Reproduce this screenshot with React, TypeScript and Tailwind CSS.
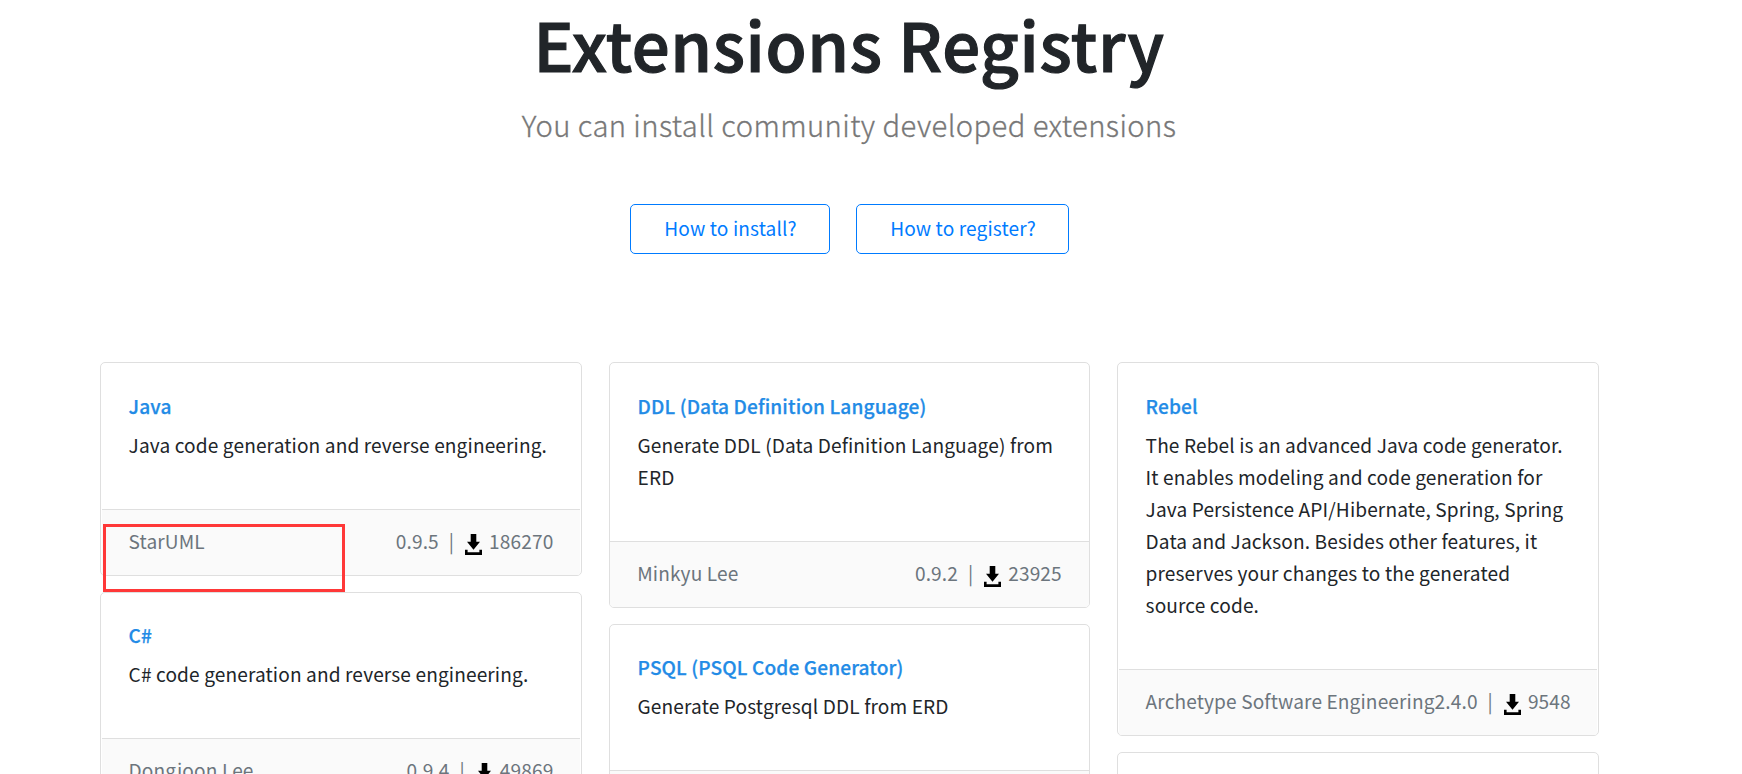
import React from 'react';

type Extension = {
  name: string;
  text: string;
  author: string;
  version: string;
  downloads: string;
};

const columns: Extension[][] = [
  [
    { name: 'Java', text: 'Java code generation and reverse engineering.', author: 'StarUML', version: '0.9.5', downloads: '186270' },
    { name: 'C#', text: 'C# code generation and reverse engineering.', author: 'Dongjoon Lee', version: '0.9.4', downloads: '49869' },
  ],
  [
    { name: 'DDL (Data Definition Language)', text: 'Generate DDL (Data Definition Language) from ERD', author: 'Minkyu Lee', version: '0.9.2', downloads: '23925' },
    { name: 'PSQL (PSQL Code Generator)', text: 'Generate Postgresql DDL from ERD', author: '', version: '', downloads: '' },
  ],
  [
    {
      name: 'Rebel',
      text: 'The Rebel is an advanced Java code generator. It enables modeling and code generation for Java Persistence API/Hibernate, Spring, Spring Data and Jackson. Besides other features, it preserves your changes to the generated source code.',
      author: 'Archetype Software Engineering',
      version: '2.4.0',
      downloads: '9548',
    },
    { name: '', text: '', author: '', version: '', downloads: '' },
  ],
];

function DownloadIcon() {
  return (
    <svg className="h-[21px] w-[17px] shrink-0" viewBox="0 0 17 21" fill="#000">
      <path d="M5.7 0h5.6v7.8H15L8.5 15.8 2 7.8h3.7z" />
      <path d="M0 15.8h2.6v2.4h11.8v-2.4H17V21H0z" />
    </svg>
  );
}

function Card({ item, inset }: { item: Extension; inset: boolean }) {
  return (
    <article className="shrink-0 overflow-hidden rounded-[5px] border border-[#dfdfdf] bg-white">
      <div className="min-h-[145.4px] pr-[25px] pb-[47.9px] pl-[27.6px] pt-[26.5px]">
        <h2 className="min-h-8 font-medium text-[#228be6] [-webkit-text-stroke:0.25px_#228be6]">{item.name}</h2>
        <p className="mt-[7px] text-[#212529]">{item.text}</p>
      </div>
      <footer
        className={`flex h-[66.1px] justify-between border-t border-[#dfdfdf] bg-[#fafafa] pt-[15.2px] whitespace-nowrap text-[#6c757d] ${
          inset ? 'mx-px px-[26.6px]' : 'px-[27.2px]'
        }`}
      >
        <span>{item.author}</span>
        {item.version && (
          <span className="flex">
            <span>{item.version}</span>
            <span className="mr-[11px] ml-[10px]">|</span>
            <span className="flex pt-[8.6px]"><DownloadIcon /></span>
            <span className="ml-[7px]">{item.downloads}</span>
          </span>
        )}
      </footer>
    </article>
  );
}

export default function App() {
  return (
    <main className="relative h-[774px] w-[1742px] overflow-hidden bg-white px-[100px] font-['Noto_Sans_CJK_SC',sans-serif] text-[19.1px] leading-[32px] tracking-[0.12px]">
      <header className="flex h-[362.4px] flex-col items-center pr-[44px]">
        <h1 className="mt-px w-full text-center text-[67px] leading-[84px] font-medium tracking-[0.65px] text-[#212529] [-webkit-text-stroke:1.2px_#212529]">Extensions Registry</h1>
        <p className="mt-[18px] w-full text-center text-[29.2px] leading-[42px] font-light tracking-[0.4px] text-[#777] [-webkit-text-stroke:0.3px_#777]">You can install community developed extensions</p>
        <div className="mt-[59px] flex gap-[26px] text-[#007bff]">
          <button className="h-[50px] w-[200px] rounded-[5px] border border-[#007bff] pb-[2px] pl-[2px]">How to install?</button>
          <button className="h-[50px] w-[213px] rounded-[5px] border border-[#007bff] pb-[2px] pl-[2px]">How to register?</button>
        </div>
      </header>
      <section className="grid grid-cols-[482px_481px_482px] gap-x-[27px]">
        {columns.map((items, i) => (
          <div key={i} className="flex flex-col gap-[16px]">
            {items.map((item, j) => (
              <Card key={j} item={item} inset={i !== 1} />
            ))}
          </div>
        ))}
      </section>
      <div className="absolute top-[524px] left-[103px] h-[68px] w-[242px] border-3 border-[#ff3838]" />
    </main>
  );
}
